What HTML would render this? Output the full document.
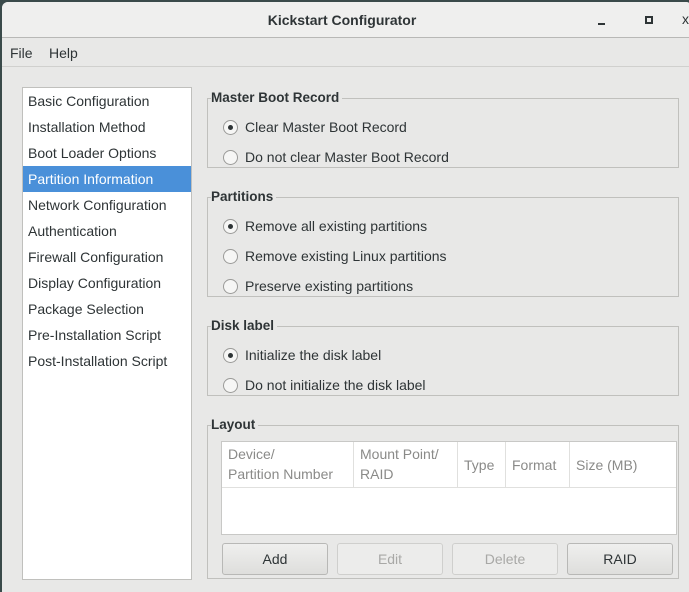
<!DOCTYPE html><html><head><style>
*{margin:0;padding:0;box-sizing:border-box}
body{width:689px;height:587px;overflow:hidden;background:#3a4a4a;font-family:"Liberation Sans",sans-serif;font-size:14px;color:#2e3436;position:relative}
.win{position:absolute;left:2px;top:2px;width:690px;height:590px;background:#e8e8e7;border-radius:6px 6px 0 0;overflow:hidden}
.title{position:absolute;left:0;top:0;width:100%;height:36px;background:#efefee;border-bottom:1px solid #b8b8b6;text-align:center;line-height:36px;font-size:14px;font-weight:bold;color:#2e3436;text-indent:-10px}
.menu{position:absolute;top:36px;left:0;width:100%;height:29px;border-bottom:1px solid #d0d0ce}
.menu span{position:absolute;top:7px}
.side{position:absolute;left:22px;top:87px;width:170px;height:493px;background:#fff;border:1px solid #c0c0bd}
.side div{height:26px;line-height:26px;padding-left:5px}
.side .sel{background:#4a90d9;color:#fff}
.fr{position:absolute;left:207px;width:472px;border:1px solid #c0c0bd}
.fr .lb{position:absolute;left:3px;top:-9px;background:#e8e8e7;padding-right:3px;font-weight:bold;font-size:13.5px;line-height:16px}
.r{position:absolute;left:15px;height:20px;line-height:20px;padding-left:22px}
.r:before{content:"";position:absolute;left:0;top:3px;width:13px;height:13px;border:1px solid #9a9a98;border-radius:50%;background:#f6f6f5}
.r.on:after{content:"";position:absolute;left:5px;top:8px;width:5px;height:5px;border-radius:50%;background:#2e3436}
.tbl{position:absolute;left:221px;top:441px;width:456px;height:94px;background:#fff;border:1px solid #c8c8c6}
.hd{position:absolute;top:0;height:46px;border-right:1px solid #e0e0de;border-bottom:1px solid #e0e0de;color:#8a8a88;padding:2px 6px;line-height:20px;font-size:14px}
.btn{position:absolute;top:543px;width:106px;height:32px;border:1px solid #b8b8b6;border-radius:3px;text-align:center;line-height:30px;background:linear-gradient(#efefee,#dededc)}
.btn.dis{background:#ececeb;color:#a8a8a6;border-color:#cfcfcd}
.ctl{position:absolute;background:#2e3436}
</style></head><body>
<div class="win">
<div class="title">Kickstart Configurator</div>
<div class="ctl" style="left:596px;top:21px;width:7px;height:2px"></div>
<div style="position:absolute;left:643px;top:14px;width:8px;height:8px;border:2px solid #2e3436"></div>
<div style="position:absolute;left:680px;top:9px;font-size:14px">x</div>
<div class="menu"><span style="left:8px">File</span><span style="left:47px">Help</span></div>
</div>
<div class="side">
<div>Basic Configuration</div><div>Installation Method</div><div>Boot Loader Options</div><div class="sel">Partition Information</div><div>Network Configuration</div><div>Authentication</div><div>Firewall Configuration</div><div>Display Configuration</div><div>Package Selection</div><div>Pre-Installation Script</div><div>Post-Installation Script</div>
</div>
<div class="fr" style="top:98px;height:70px"><div class="lb">Master Boot Record</div>
<div class="r on" style="top:18px">Clear Master Boot Record</div>
<div class="r" style="top:48px">Do not clear Master Boot Record</div></div>
<div class="fr" style="top:197px;height:100px"><div class="lb">Partitions</div>
<div class="r on" style="top:18px">Remove all existing partitions</div>
<div class="r" style="top:48px">Remove existing Linux partitions</div>
<div class="r" style="top:78px">Preserve existing partitions</div></div>
<div class="fr" style="top:326px;height:70px"><div class="lb">Disk label</div>
<div class="r on" style="top:18px">Initialize the disk label</div>
<div class="r" style="top:48px">Do not initialize the disk label</div></div>
<div class="fr" style="top:425px;height:154px"><div class="lb">Layout</div></div>
<div class="tbl">
<div class="hd" style="left:0;width:132px">Device/<br>Partition Number</div>
<div class="hd" style="left:132px;width:104px">Mount Point/<br>RAID</div>
<div class="hd" style="left:236px;width:48px;line-height:42px">Type</div>
<div class="hd" style="left:284px;width:64px;line-height:42px">Format</div>
<div class="hd" style="left:348px;width:106px;line-height:42px;border-right:none">Size (MB)</div>
</div>
<div class="btn" style="left:222px">Add</div>
<div class="btn dis" style="left:337px">Edit</div>
<div class="btn dis" style="left:452px">Delete</div>
<div class="btn" style="left:567px">RAID</div>
</body></html>
